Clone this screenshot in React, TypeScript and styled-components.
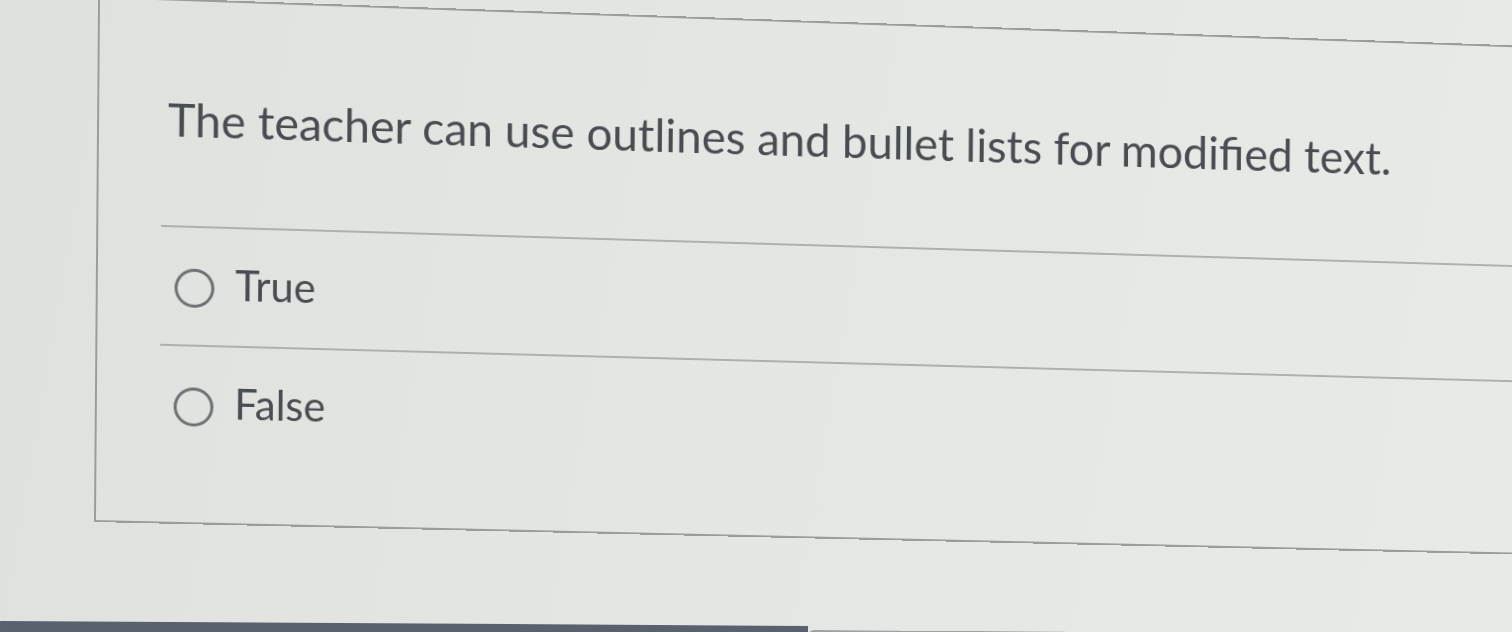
import React from "react";
import styled, { createGlobalStyle } from "styled-components";

const GlobalStyle = createGlobalStyle`
  html, body {
    margin: 0;
    padding: 0;
    background: #e3e5e3;
    overflow: hidden;
  }
  * {
    box-sizing: border-box;
  }
`;

const Page = styled.div`
  width: 1512px;
  height: 632px;
  display: flex;
  flex-direction: column;
  overflow: hidden;
  background: linear-gradient(100deg, #dfe1df 0%, #e4e6e4 45%, #e8eae8 100%);
  font-family: Lato, "Open Sans", "Liberation Sans", sans-serif;
  color: #484d51;
`;

const Stage = styled.div`
  flex: 1;
  min-height: 0;
`;

// the quiz panel is seen at a slight angle: tilted and receding to the right
const Tilt = styled.div`
  padding-left: 96px;
  margin-top: -4px;
  transform: perspective(2000px) rotateY(2.6deg) rotate(0.45deg) skewY(1.2deg);
  transform-origin: 96px 264px;
`;

const Card = styled.div`
  width: 1500px;
  height: 526px;
  border: 2px solid #9b9d9d;
  border-right: none;
  padding: 90px 0 0 0;
`;

const Question = styled.p`
  margin: 0 0 79px 69px;
  font-size: 47px;
  font-weight: 400;
  line-height: 1.2;
  white-space: nowrap;
`;

const Answers = styled.div`
  margin-left: 63px;
  display: flex;
  flex-direction: column;
`;

const Answer = styled.label`
  height: 119px;
  padding-top: 4px;
  border-top: 2px solid #adb0af;
  display: flex;
  align-items: center;
  gap: 21px;
  cursor: pointer;
`;

const Radio = styled.span`
  width: 40px;
  height: 39px;
  margin-left: 14px;
  border: 3px solid #6e7173;
  border-radius: 50%;
  flex-shrink: 0;
`;

const AnswerText = styled.span`
  font-size: 42px;
  line-height: 1.2;
  margin-bottom: 10px;
`;

const Footer = styled.div`
  height: 11px;
  display: flex;
  align-items: flex-end;
  transform: rotate(0.35deg);
  transform-origin: 0 100%;
`;

const Dock = styled.div`
  width: 808px;
  height: 11px;
  background: #58616d;
`;

const DockSlot = styled.div`
  width: 305px;
  height: 7px;
  border: 2px solid #9fa1a2;
  border-bottom: none;
  border-radius: 6px 6px 0 0;
  background: #e6e8e9;
`;

const answers = ["True", "False"];

const App: React.FC = () => {
  return (
    <>
      <GlobalStyle />
      <Page>
        <Stage>
          <Tilt>
            <Card>
              <Question>
                The teacher can use outlines and bullet lists for modified text.
              </Question>
              <Answers>
                {answers.map((a) => (
                  <Answer key={a}>
                    <Radio />
                    <AnswerText>{a}</AnswerText>
                  </Answer>
                ))}
              </Answers>
            </Card>
          </Tilt>
        </Stage>
        <Footer>
          <Dock />
          <DockSlot />
        </Footer>
      </Page>
    </>
  );
};

export default App;
